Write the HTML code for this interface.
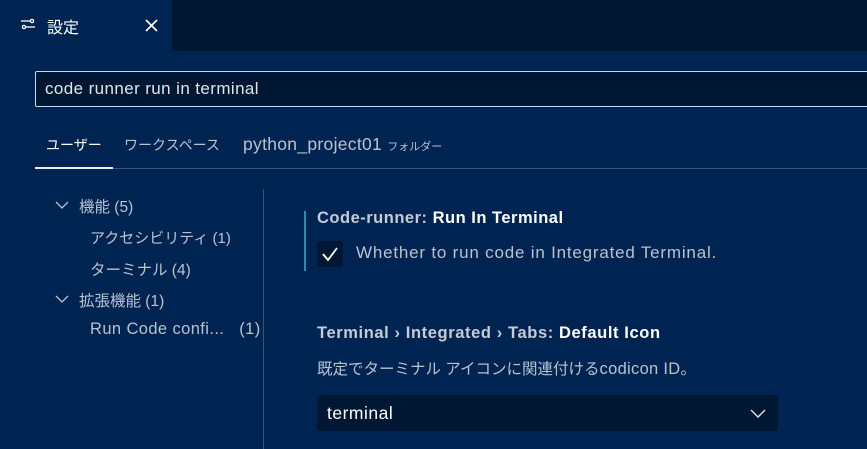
<!DOCTYPE html>
<html><head><meta charset="utf-8"><style>
*{margin:0;padding:0;box-sizing:border-box}
body{width:867px;height:449px;overflow:hidden;background:#002451;font-family:"Liberation Sans","Noto Sans CJK JP",sans-serif;color:#ccd3dd;position:relative}
.a{position:absolute;white-space:nowrap}
</style></head><body>
<div class="a" style="left:0;top:0;width:867px;height:51px;background:#001733"></div>
<div class="a" style="left:0;top:0;width:172px;height:51px;background:#002451"></div>
<svg class="a" style="left:20px;top:17px" width="16" height="14" viewBox="0 0 16 14"><g stroke="#fff" stroke-width="1.3" fill="none"><line x1="1" y1="4" x2="10" y2="4"/><circle cx="12" cy="4" r="1.6"/><line x1="6" y1="10" x2="15" y2="10"/><circle cx="4" cy="10" r="1.6"/></g></svg>
<div class="a" style="left:47px;top:14px;font-size:16px;color:#fff">設定</div>
<svg class="a" style="left:145px;top:19px" width="13" height="13" viewBox="0 0 13 13"><path d="M1 1L12 12M12 1L1 12" stroke="#fff" stroke-width="1.6"/></svg>
<div class="a" style="left:35px;top:71px;width:840px;height:36px;background:#001733;border:1px solid #bbdaff;border-radius:2px"></div>
<div class="a" style="left:45px;top:79px;font-size:17px;letter-spacing:0.4px;color:#dfe4ea">code runner run in terminal</div>
<div class="a" style="left:46px;top:135px;font-size:14px;color:#fff">ユーザー</div>
<div class="a" style="left:124px;top:135px;font-size:14px;color:#b9c2cf">ワークスペース</div>
<div class="a" style="left:243px;top:134px;font-size:17.5px;letter-spacing:0.3px;color:#b9c2cf">python_project01 <span style="font-size:11px;letter-spacing:0">フォルダー</span></div>
<div class="a" style="left:35px;top:168px;width:840px;height:1px;background:#3a5478"></div>
<div class="a" style="left:35px;top:167px;width:78px;height:2px;background:#e8edf3"></div>
<div class="a" style="left:263px;top:189px;width:1px;height:260px;background:#3a5478"></div>
<svg class="a" style="left:55px;top:200px" width="14" height="10"><path d="M1 2L7 8L13 2" stroke="#b9c2cf" stroke-width="1.3" fill="none"/></svg>
<svg class="a" style="left:55px;top:294px" width="14" height="10"><path d="M1 2L7 8L13 2" stroke="#b9c2cf" stroke-width="1.3" fill="none"/></svg>
<div class="a" style="left:79px;top:195px;font-size:15.5px;color:#b9c2cf">機能 (5)</div>
<div class="a" style="left:90px;top:227px;font-size:15px;color:#b9c2cf">アクセシビリティ (1)</div>
<div class="a" style="left:90px;top:258px;font-size:15.5px;color:#b9c2cf">ターミナル (4)</div>
<div class="a" style="left:79px;top:289px;font-size:15.5px;color:#b9c2cf">拡張機能 (1)</div>
<div class="a" style="left:90px;top:320px;font-size:16.5px;letter-spacing:0.4px;color:#b9c2cf">Run Code confi...&nbsp;&nbsp; (1)</div>
<div class="a" style="left:304px;top:211px;width:2px;height:60px;background:#2b8cae"></div>
<div class="a" style="left:317px;top:209px;font-size:16.5px;letter-spacing:0.5px;font-weight:bold;color:#c5ccd6">Code-runner: <span style="color:#fff">Run In Terminal</span></div>
<div class="a" style="left:317px;top:241px;width:26px;height:26px;background:#001733;border-radius:3px"></div>
<svg class="a" style="left:320px;top:245px" width="20" height="18"><path d="M3 9L8 15L17 3" stroke="#fff" stroke-width="1.8" fill="none"/></svg>
<div class="a" style="left:356px;top:243px;font-size:17px;letter-spacing:0.8px;color:#b9c2cf">Whether to run code in Integrated Terminal.</div>
<div class="a" style="left:317px;top:324px;font-size:16.5px;letter-spacing:0.6px;font-weight:bold;color:#c5ccd6">Terminal › Integrated › Tabs: <span style="color:#fff">Default Icon</span></div>
<div class="a" style="left:317px;top:357px;font-size:15.5px;color:#b9c2cf">既定でターミナル アイコンに関連付ける<span style="font-size:16.5px;letter-spacing:0.3px">codicon ID</span>。</div>
<div class="a" style="left:317px;top:395px;width:461px;height:36px;background:#001733;border-radius:2px"></div>
<div class="a" style="left:327px;top:403px;font-size:17.5px;letter-spacing:0.5px;color:#fff">terminal</div>
<svg class="a" style="left:750px;top:409px" width="16" height="10"><path d="M1 1L8 8L15 1" stroke="#dfe4ea" stroke-width="1.4" fill="none"/></svg>
</body></html>
